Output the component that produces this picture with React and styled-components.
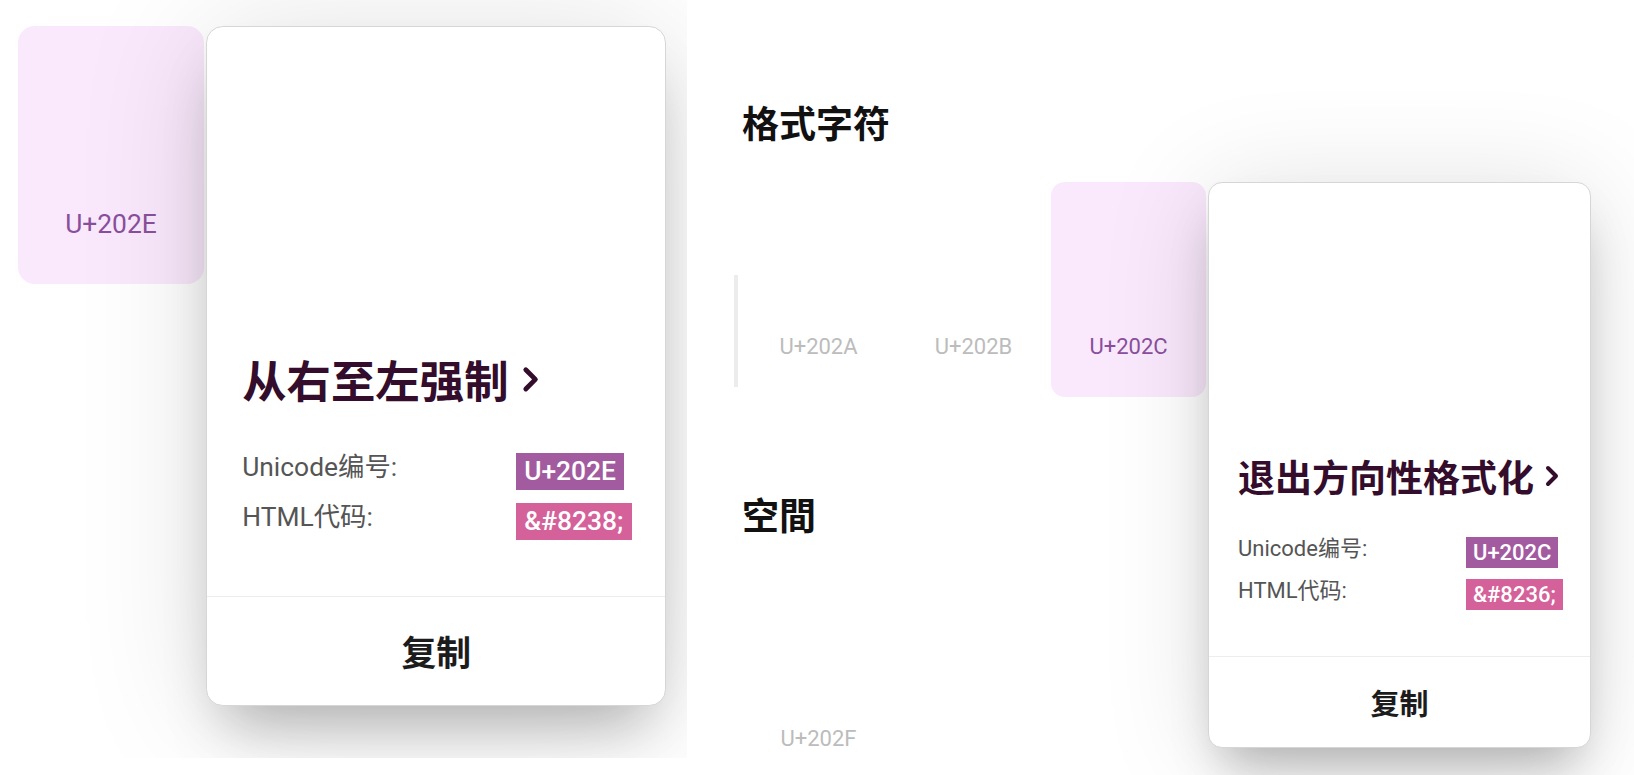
import React from 'react'
import styled, { createGlobalStyle } from 'styled-components'

const GlobalStyle = createGlobalStyle`
  html, body {
    margin: 0;
    padding: 0;
    background: #fff;
    font-family: Roboto, "Noto Sans CJK SC", sans-serif;
  }
  body {
    width: 1634px;
    height: 775px;
    overflow: hidden;
  }
`

const formatChars = [
  { code: 'U+202A' },
  { code: 'U+202B' },
  {
    code: 'U+202C',
    active: true,
    name: '退出方向性格式化',
    html: '&#8236;',
  },
]

function Chevron() {
  return (
    <ChevronSvg viewBox="0 0 16 24" width="16" height="24">
      <polyline points="4,4 12,12 4,20" fill="none" stroke="currentColor" strokeWidth="4" strokeLinecap="round" strokeLinejoin="round" />
    </ChevronSvg>
  )
}

function DetailCard({ name, code, html }) {
  return (
    <Card>
      <CardBody>
        <CardTitle>
          {name}
          <Chevron />
        </CardTitle>
        <InfoGrid>
          <InfoLabel>Unicode编号:</InfoLabel>
          <Badge $kind="code">{code}</Badge>
          <InfoLabel>HTML代码:</InfoLabel>
          <Badge $kind="html">{html}</Badge>
        </InfoGrid>
      </CardBody>
      <CardFooter>复制</CardFooter>
    </Card>
  )
}

function CharTile({ item }) {
  return (
    <Tile $active={item.active}>
      <TileCode $active={item.active}>{item.code}</TileCode>
      {item.active && <DetailCard name={item.name} code={item.code} html={item.html} />}
    </Tile>
  )
}

export default function App() {
  return (
    <Page>
      <GlobalStyle />
      <LeftPanel>
        <Zoomed>
          <CharTile item={{ code: 'U+202E', active: true, name: '从右至左强制', html: '&#8238;' }} />
        </Zoomed>
      </LeftPanel>

      <RightPanel>
        <Section>
          <SectionTitle>格式字符</SectionTitle>
          <TileRow $bordered>
            {formatChars.map((item) => (
              <CharTile key={item.code} item={item} />
            ))}
          </TileRow>
        </Section>
        <Section>
          <SectionTitle>空間</SectionTitle>
          <TileRow>
            <CharTile item={{ code: 'U+202F' }} />
          </TileRow>
        </Section>
      </RightPanel>
    </Page>
  )
}

const Page = styled.div`
  display: flex;
  align-items: flex-start;
  width: 1634px;
  height: 775px;
  overflow: hidden;
`

const LeftPanel = styled.div`
  flex-shrink: 0;
  width: 687px;
  height: 758px;
  overflow: hidden;
  background: #fff;
`

const Zoomed = styled.div`
  zoom: 1.2;
  padding: 22px 0 0 15px;
`

const RightPanel = styled.div`
  flex: 1;
  height: 775px;
  overflow: hidden;
  padding: 102px 0 0 47px;
  box-sizing: border-box;
`

const Section = styled.section`
  & + & {
    margin-top: 107px;
  }
`

const SectionTitle = styled.h2`
  margin: 0 0 133px 8px;
  font-family: "Noto Sans CJK SC", sans-serif;
  font-size: 37px;
  line-height: 40px;
  font-weight: 700;
  color: #111;
`

const TileRow = styled.div`
  display: flex;
  align-items: flex-end;
  height: 112px;
  padding-left: 3px;
  border-left: 4px solid ${(p) => (p.$bordered ? '#ececec' : 'transparent')};
`

const Tile = styled.div`
  position: relative;
  z-index: ${(p) => (p.$active ? 2 : 1)};
  flex-shrink: 0;
  width: 155px;
  height: ${(p) => (p.$active ? '215px' : '112px')};
  margin-bottom: ${(p) => (p.$active ? '-10px' : '0')};
  display: flex;
  flex-direction: column;
  justify-content: flex-end;
  align-items: center;
  padding-bottom: ${(p) => (p.$active ? '37px' : '27px')};
  box-sizing: border-box;
  border-radius: 14px;
  background: ${(p) => (p.$active ? '#fae9fc' : 'transparent')};
`

const TileCode = styled.span`
  font-family: Roboto, sans-serif;
  font-size: 22px;
  line-height: 26px;
  color: ${(p) => (p.$active ? '#8a4f9c' : '#bcbcbc')};
`

const Card = styled.div`
  position: absolute;
  top: 0;
  left: calc(100% + 2px);
  width: 383px;
  height: 566px;
  box-sizing: border-box;
  display: flex;
  flex-direction: column;
  background: #fff;
  border: 1px solid #d6d6d6;
  border-radius: 14px;
  box-shadow: 0 30px 45px -14px rgba(0, 0, 0, 0.26), 0 8px 110px rgba(0, 0, 0, 0.13);
`

const CardBody = styled.div`
  flex: 1;
  display: flex;
  flex-direction: column;
  justify-content: flex-end;
  padding: 0 29px 46px;
`

const CardTitle = styled.h3`
  display: flex;
  align-items: center;
  margin: 0 0 39px;
  font-family: "Noto Sans CJK SC", sans-serif;
  font-size: 37px;
  line-height: 44px;
  font-weight: 700;
  color: #330d2b;
  white-space: nowrap;
`

const ChevronSvg = styled.svg`
  margin-left: 10px;
  flex-shrink: 0;
`

const InfoGrid = styled.div`
  display: grid;
  grid-template-columns: 228px auto;
  row-gap: 11px;
  align-items: start;
`

const InfoLabel = styled.span`
  font-size: 22px;
  line-height: 24px;
  color: #555;
`

const Badge = styled.span`
  justify-self: start;
  padding: 0 7px;
  font-size: 22px;
  line-height: 31px;
  font-weight: 500;
  color: #fff;
  background: ${(p) => (p.$kind === 'code' ? '#a35b9f' : '#d5619a')};
`

const CardFooter = styled.div`
  height: 90px;
  flex-shrink: 0;
  display: flex;
  align-items: center;
  justify-content: center;
  border-top: 1px solid #ededed;
  font-family: "Noto Sans CJK SC", sans-serif;
  font-size: 29px;
  font-weight: 700;
  color: #1c1c1c;
`
